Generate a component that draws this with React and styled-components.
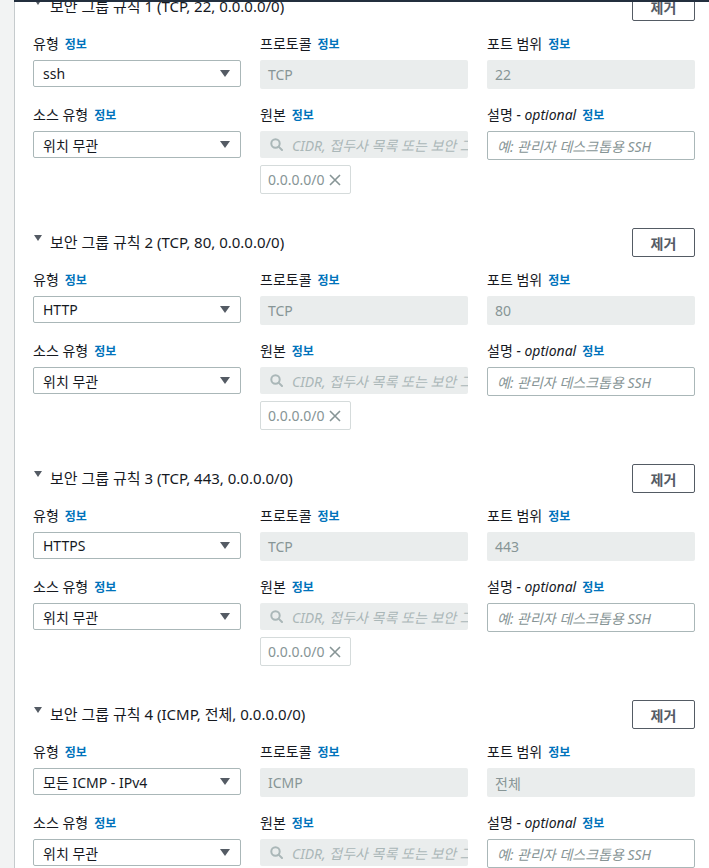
import React from 'react'
import styled, { createGlobalStyle } from 'styled-components'

const GlobalStyle = createGlobalStyle`
  html, body {
    margin: 0;
    padding: 0;
    background: #ffffff;
    overflow: hidden;
  }
  body {
    font-family: "Noto Sans", "Noto Sans CJK KR", sans-serif;
    font-size: 14px;
    color: #16191f;
  }
`

const rules = [
  { n: 1, summary: 'TCP, 22, 0.0.0.0/0', type: 'ssh', protocol: 'TCP', port: '22' },
  { n: 2, summary: 'TCP, 80, 0.0.0.0/0', type: 'HTTP', protocol: 'TCP', port: '80' },
  { n: 3, summary: 'TCP, 443, 0.0.0.0/0', type: 'HTTPS', protocol: 'TCP', port: '443' },
  { n: 4, summary: 'ICMP, 전체, 0.0.0.0/0', type: '모든 ICMP - IPv4', protocol: 'ICMP', port: '전체' },
]

const Caret = () => (
  <Icon width="10" height="7" viewBox="0 0 10 7">
    <path d="M0 0 H10 L5 7 Z" fill="#545b64" />
  </Icon>
)

const SearchIcon = () => (
  <Icon width="13" height="13" viewBox="0 0 13 13" fill="none" stroke="#aab7b8" strokeWidth="2">
    <circle cx="5.5" cy="5.5" r="4.2" />
    <path d="M8.6 8.6 L12 12" strokeLinecap="round" />
  </Icon>
)

const CloseIcon = () => (
  <Icon width="12" height="12" viewBox="0 0 12 12" stroke="#879596" strokeWidth="1.6">
    <path d="M1 1 L11 11 M11 1 L1 11" />
  </Icon>
)

const FieldLabel = ({ children, optional }) => (
  <Label>
    {children}
    {optional && <Optional>&nbsp;- optional</Optional>}
    <InfoLink>정보</InfoLink>
  </Label>
)

const Rule = ({ rule }) => (
  <RuleBlock>
    <RuleHeader>
      <RuleTitle>
        <Toggle />
        보안 그룹 규칙 {rule.n} ({rule.summary})
      </RuleTitle>
      <RemoveButton>제거</RemoveButton>
    </RuleHeader>

    <FieldGrid>
      <Field>
        <FieldLabel>유형</FieldLabel>
        <Select>
          <span>{rule.type}</span>
          <Caret />
        </Select>
      </Field>
      <Field>
        <FieldLabel>프로토콜</FieldLabel>
        <ReadOnly>{rule.protocol}</ReadOnly>
      </Field>
      <Field>
        <FieldLabel>포트 범위</FieldLabel>
        <ReadOnly>{rule.port}</ReadOnly>
      </Field>

      <Field>
        <FieldLabel>소스 유형</FieldLabel>
        <Select>
          <span>위치 무관</span>
          <Caret />
        </Select>
      </Field>
      <Field>
        <FieldLabel>원본</FieldLabel>
        <SearchBox>
          <SearchIcon />
          <Placeholder>CIDR, 접두사 목록 또는 보안 그룹</Placeholder>
        </SearchBox>
        <Token>
          0.0.0.0/0
          <CloseIcon />
        </Token>
      </Field>
      <Field>
        <FieldLabel optional>설명</FieldLabel>
        <TextInput>
          <Placeholder>예: 관리자 데스크톱용 SSH</Placeholder>
        </TextInput>
      </Field>
    </FieldGrid>
  </RuleBlock>
)

const App = () => (
  <>
    <GlobalStyle />
    <TopEdge />
    <Page>
      <Sidebar />
      <Main>
        <RuleList>
          {rules.map(rule => <Rule key={rule.n} rule={rule} />)}
        </RuleList>
      </Main>
    </Page>
  </>
)

export default App

const Icon = styled.svg`
  flex-shrink: 0;
  display: block;
`

const TopEdge = styled.div`
  position: fixed;
  top: 0;
  left: 14px;
  right: 0;
  height: 2px;
  background: #232f3e;
  z-index: 10;
`

const Page = styled.div`
  display: flex;
  min-height: 100vh;
`

const Sidebar = styled.div`
  width: 14px;
  flex-shrink: 0;
  background: #f2f3f3;
  border-right: 1px solid #c6cbcd;
`

const Main = styled.div`
  flex: 1;
  min-width: 0;
  padding: 0 14px 0 18px;
`

const RuleList = styled.div`
  margin-top: -8px;
`

const RuleBlock = styled.section`
  padding-bottom: 34px;
`

const RuleHeader = styled.div`
  display: flex;
  align-items: center;
  justify-content: space-between;
  height: 29px;
`

const RuleTitle = styled.div`
  display: flex;
  align-items: center;
  font-size: 15px;
  line-height: 20px;
  color: #16191f;
  margin-top: -2px;
  white-space: nowrap;
`

const Toggle = styled.span`
  width: 0;
  height: 0;
  border-left: 4.5px solid transparent;
  border-right: 4.5px solid transparent;
  border-top: 6px solid #545b64;
  margin: 0 8px 0 1px;
  transform: translateY(-4px);
`

const RemoveButton = styled.button`
  width: 63px;
  height: 29px;
  border: 1px solid #545b64;
  border-radius: 2px;
  background: #ffffff;
  color: #545b64;
  font-family: inherit;
  font-size: 14px;
  font-weight: 700;
  padding: 0;
  cursor: pointer;
`

const FieldGrid = styled.div`
  display: grid;
  grid-template-columns: repeat(3, minmax(0, 1fr));
  column-gap: 19px;
  row-gap: 16px;
  margin-top: 13px;
  align-items: start;
`

const Field = styled.div`
  display: flex;
  flex-direction: column;
  align-items: stretch;
  min-width: 0;
`

const Label = styled.div`
  height: 20px;
  line-height: 20px;
  font-size: 14px;
  color: #16191f;
  margin-bottom: 6px;
  white-space: nowrap;
`

const Optional = styled.i`
  font-style: italic;
`

const InfoLink = styled.a`
  margin-left: 6px;
  font-size: 12px;
  font-weight: 700;
  color: #0073bb;
`

const Select = styled.div`
  display: flex;
  align-items: center;
  justify-content: space-between;
  height: 27px;
  box-sizing: border-box;
  border: 1px solid #aab7b8;
  border-radius: 2px;
  padding: 0 10px 0 9px;
  color: #16191f;
`

const ReadOnly = styled.div`
  display: flex;
  align-items: center;
  height: 29px;
  box-sizing: border-box;
  border-radius: 2px;
  background: #eaeded;
  padding-left: 8px;
  color: #879596;
`

const SearchBox = styled.div`
  display: flex;
  align-items: center;
  gap: 9px;
  height: 27px;
  box-sizing: border-box;
  border-radius: 2px;
  background: #eaeded;
  padding-left: 10px;
  overflow: hidden;
  white-space: nowrap;
`

const Placeholder = styled.span`
  font-style: italic;
  color: #aab7b8;
  white-space: nowrap;
`

const Token = styled.div`
  display: flex;
  align-items: center;
  justify-content: space-between;
  width: 91px;
  height: 29px;
  box-sizing: border-box;
  margin-top: 7px;
  border: 1px solid #d5dbdb;
  border-radius: 2px;
  padding: 0 9px 0 7px;
  color: #879596;
`

const TextInput = styled.div`
  display: flex;
  align-items: center;
  height: 29px;
  box-sizing: border-box;
  border: 1px solid #aab7b8;
  border-radius: 2px;
  padding-left: 9px;

  ${Placeholder} {
    color: #879596;
  }
`
